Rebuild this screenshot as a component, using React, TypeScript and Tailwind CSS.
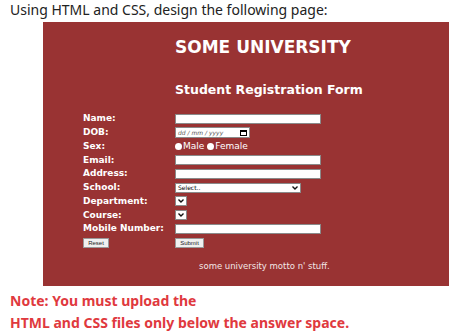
import { useState } from 'react';

const labelCls = 'w-[92px] shrink-0 text-[9px] font-bold leading-none text-white';
const inputCls = 'h-[10px] bg-white border border-[#8a8a8a]';

function Row({ label, children }: { label: string; children?: React.ReactNode }) {
  return (
    <div className="flex h-[13.75px] items-center">
      <span className={labelCls}>{label}</span>
      {children}
    </div>
  );
}

function SelectBox({ width, text }: { width: string; text?: string }) {
  return (
    <div className={`${inputCls} ${width} flex items-center justify-between px-[2px]`}>
      <span className="text-[6px] leading-none text-black">{text}</span>
      <svg width="6" height="4" viewBox="0 0 6 4">
        <path d="M0.5 0.5 L3 3 L5.5 0.5" stroke="#111" strokeWidth="1.4" fill="none" />
      </svg>
    </div>
  );
}

export default function App() {
  const [sex, setSex] = useState<'m' | 'f' | null>(null);

  return (
    <div className="w-[474px] h-[336px] overflow-hidden bg-white font-['Noto_Sans',sans-serif]">
      <p className="pl-[10px] pt-[1px] text-[14px] leading-[18px] text-[#222]">Using HTML and CSS, design the following page:</p>

      <div className="ml-[43px] mt-[3px] h-[264px] w-[406px] bg-[#993333] font-['DejaVu_Sans',Verdana,sans-serif]">
        <h1 className="pl-[132px] pt-[15px] text-[17px] font-bold leading-[20px] text-white">SOME UNIVERSITY</h1>
        <h2 className="pl-[132px] pt-[25px] text-[12.5px] font-bold leading-[16px] text-white">Student Registration Form</h2>

        <div className="mt-[14px] pl-[40px]">
          <Row label="Name:"><div className={`${inputCls} w-[146px]`} /></Row>
          <Row label="DOB:">
            <div className={`${inputCls} w-[75px] h-[11px] flex items-center justify-between px-[2px]`}>
              <span className="text-[6px] italic leading-none text-[#555]">dd / mm / yyyy</span>
              <span className="block h-[6px] w-[7px] border border-t-2 border-black" />
            </div>
          </Row>
          <Row label="Sex:">
            <label className="flex items-center gap-[1px] text-[9px] leading-none text-white" onClick={() => setSex('m')}>
              <span className={`block h-[7px] w-[7px] rounded-full ${sex === 'm' ? 'bg-[#ddd]' : 'bg-white'}`} />Male
            </label>
            <label className="ml-[3px] flex items-center gap-[1px] text-[9px] leading-none text-white" onClick={() => setSex('f')}>
              <span className={`block h-[7px] w-[7px] rounded-full ${sex === 'f' ? 'bg-[#ddd]' : 'bg-white'}`} />Female
            </label>
          </Row>
          <Row label="Email:"><div className={`${inputCls} w-[146px]`} /></Row>
          <Row label="Address:"><div className={`${inputCls} w-[146px]`} /></Row>
          <Row label="School:"><SelectBox width="w-[126px]" text="Select.." /></Row>
          <Row label="Department:"><SelectBox width="w-[12px]" /></Row>
          <Row label="Course:"><SelectBox width="w-[12px]" /></Row>
          <Row label="Mobile Number:"><div className={`${inputCls} w-[146px]`} /></Row>
          <div className="flex h-[13.75px] items-center">
            <div className="w-[92px]">
              <button className="block h-[10px] w-[26px] bg-[#f0f0f0] border border-[#999] text-[6px] leading-none text-[#222] font-['Liberation_Sans',Arial,sans-serif]">Reset</button>
            </div>
            <button className="block h-[10px] w-[29px] bg-[#f0f0f0] border border-[#999] text-[6px] leading-none text-[#222] font-['Liberation_Sans',Arial,sans-serif]">Submit</button>
          </div>
        </div>

        <p className="pl-[156px] pt-[12px] text-[8.5px] leading-none text-[#f3e6e6]">some university motto n' stuff.</p>
      </div>

      <div className="pl-[10px] pt-[4px] text-[14px] font-bold leading-[22px] text-[#e0393e]">
        <p>Note: You must upload the</p>
        <p>HTML and CSS files only below the answer space.</p>
      </div>
    </div>
  );
}
